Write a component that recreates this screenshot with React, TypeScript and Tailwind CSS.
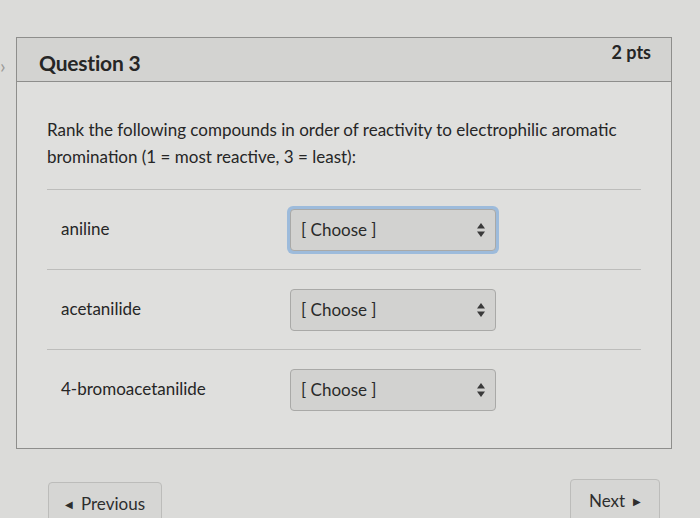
import { ChangeEvent, useState } from 'react';

const compounds = ['aniline', 'acetanilide', '4-bromoacetanilide'];
const choices = ['[ Choose ]', '1', '2', '3'];

function RankSelect({ focused }: { focused?: boolean }) {
  const [value, setValue] = useState(choices[0]);
  return (
    <div
      className={
        focused
          ? 'ml-auto mr-[142px] rounded-[6px] p-[3px] bg-[#9dbbdb]'
          : 'ml-auto mr-[142px] rounded-[6px] p-[3px]'
      }
    >
      <div className="relative h-[42px] w-[206px] rounded-[4px] border border-[#a9a9a7] bg-[#d2d2d0]">
        <select
          value={value}
          onChange={(e: ChangeEvent<HTMLSelectElement>) => setValue(e.target.value)}
          className="h-full w-full appearance-none bg-transparent pl-[10px] text-[17px] text-[#2a2a2a] outline-none"
        >
          {choices.map((c) => (
            <option key={c}>{c}</option>
          ))}
        </select>
        <svg
          width="8"
          height="14"
          viewBox="0 0 8 14"
          className="pointer-events-none absolute right-[10px] top-[13px]"
          fill="#3a3a3a"
        >
          <path d="M4 0 L8 5.5 L0 5.5 Z" />
          <path d="M4 14 L8 8.5 L0 8.5 Z" />
        </svg>
      </div>
    </div>
  );
}

export default function App() {
  return (
    <div
      className="flex h-[518px] w-[700px] flex-col overflow-hidden bg-[#dbdbd9] text-[#262626]"
      style={{ fontFamily: 'Lato, "Open Sans", sans-serif' }}
    >
      <div className="flex items-start pt-[37px]">
        <div className="mt-[18px] w-[16px] text-[20px] leading-none text-[#9a9a98]">›</div>

        <div className="w-[656px] border border-[#8e8e8c] bg-[#dfdfdd]">
          <div className="flex h-[44px] items-start justify-between border-b border-[#8e8e8c] bg-[#d3d3d1] pl-[22px] pr-[20px]">
            <h2 className="mt-[9px] text-[21px] font-bold tracking-[-0.2px]">Question 3</h2>
            <span className="mt-[1px] text-[18px] font-bold">2 pts</span>
          </div>

          <div className="px-[30px] pt-[34px] pb-[19px]">
            <p className="text-[17px] leading-[27px]">
              Rank the following compounds in order of reactivity to electrophilic aromatic
              bromination (1 = most reactive, 3 = least):
            </p>

            <div className="mt-[19px] border-t border-[#bdbdbb]">
              {compounds.map((name, i) => (
                <div
                  key={name}
                  className={
                    i < compounds.length - 1
                      ? 'flex items-start border-b border-[#bdbdbb] pt-[16px] pb-[15px]'
                      : 'flex items-start pt-[16px] pb-[15px]'
                  }
                >
                  <span className="ml-[14px] pt-[10px] text-[17px]">{name}</span>
                  <RankSelect focused={i === 0} />
                </div>
              ))}
            </div>
          </div>
        </div>
      </div>

      <div className="mt-[33px] flex justify-between pl-[48px] pr-[40px]">
        <button className="flex h-[44px] w-[114px] items-center justify-center gap-[8px] rounded-[4px] border border-[#bcbcba] bg-[#d6d6d4] text-[17px] text-[#2e2e2e]">
          <span className="text-[10px]">◀</span>
          Previous
        </button>
        <button className="-mt-[3px] flex h-[44px] w-[90px] items-center justify-center gap-[8px] rounded-[4px] border border-[#bcbcba] bg-[#d6d6d4] text-[17px] text-[#2e2e2e]">
          Next
          <span className="text-[10px]">▶</span>
        </button>
      </div>
    </div>
  );
}
